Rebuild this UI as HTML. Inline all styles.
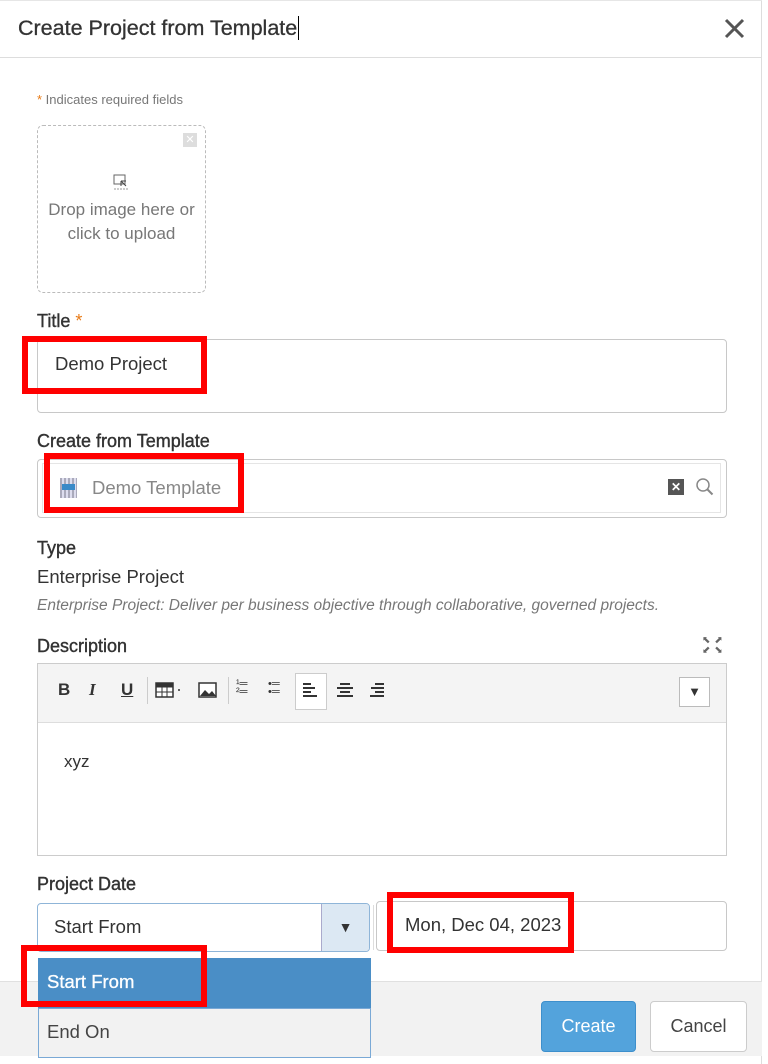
<!DOCTYPE html>
<html><head><meta charset="utf-8"><style>
*{box-sizing:border-box;margin:0;padding:0}
body{width:768px;height:1064px;background:#fff;font-family:"Liberation Sans",Arial,sans-serif;color:#333;position:relative;overflow:hidden}
.a{position:absolute}
.lbl{font-size:18px;color:#333;-webkit-text-stroke:0.4px #333}
.inp{border:1px solid #c8c8c8;border-radius:4px;background:#fff}
.red{border:6px solid #f00}
.tb{font-size:17px;font-weight:bold;color:#333}
</style></head><body>
<div class="a" style="left:0;top:0;width:762px;height:1064px;border-right:1px solid #ddd"></div>
<div class="a" style="left:0;top:0;width:762px;height:58px;border-bottom:1px solid #ddd;border-top:1px solid #e6e6e6"></div>
<div class="a" style="left:18px;top:16px;font-size:21.5px;color:#333;-webkit-text-stroke:0.3px #333">Create Project from Template<span style="border-left:1.5px solid #000;margin-left:1px"></span></div>
<svg class="a" style="left:724px;top:18px" width="21" height="21" viewBox="0 0 21 21"><path d="M2 2l17 17M19 2L2 19" stroke="#555" stroke-width="3"/></svg>

<div class="a" style="left:37px;top:92px;font-size:13px;color:#777"><span style="color:#e87a16">*</span> Indicates required fields</div>
<div class="a" style="left:37px;top:125px;width:169px;height:168px;border:1px dashed #bbb;border-radius:6px"></div>
<div class="a" style="left:183px;top:133px;width:14px;height:14px;background:#ddd;color:#fff;font-size:11px;text-align:center;line-height:14px">✕</div>
<svg class="a" style="left:113px;top:174px" width="18" height="18" viewBox="0 0 18 18"><rect x="1" y="1" width="11" height="9" fill="none" stroke="#666"/><path d="M8 7l5 5M8 7v5M8 7h5" stroke="#444" fill="none"/><path d="M1 15h14" stroke="#999" stroke-dasharray="2 1"/></svg>
<div class="a" style="left:33px;top:198px;width:177px;text-align:center;font-size:17px;color:#777;line-height:24px">Drop image here or<br>click to upload</div>

<div class="a lbl" style="left:37px;top:311px">Title <span style="color:#e87a16;-webkit-text-stroke:0">*</span></div>
<div class="a inp" style="left:37px;top:339px;width:690px;height:74px"></div>
<div class="a red" style="left:22px;top:336px;width:185px;height:58px"></div>
<div class="a" style="left:55px;top:353px;font-size:18.5px;color:#333">Demo Project</div>

<div class="a lbl" style="left:37px;top:431px">Create from Template</div>
<div class="a inp" style="left:37px;top:459px;width:690px;height:59px"></div>
<div class="a" style="left:42px;top:463px;width:679px;height:50px;border:1px solid #e5e5e5"></div>
<div class="a red" style="left:44px;top:453px;width:200px;height:60px"></div>
<div class="a" style="left:60px;top:478px;width:17px;height:20px;background:repeating-linear-gradient(90deg,#aab 0 2px,#dde 2px 4px)"><div style="margin:6px 2px;height:6px;background:#3a8ac8"></div></div>
<div class="a" style="left:92px;top:477px;font-size:18.5px;color:#888">Demo Template</div>
<div class="a" style="left:668px;top:479px;width:16px;height:16px;background:#555;color:#fff;font-size:12px;text-align:center;line-height:16px;font-weight:bold">✕</div>
<svg class="a" style="left:695px;top:477px" width="20" height="20" viewBox="0 0 20 20"><circle cx="8" cy="8" r="6" fill="none" stroke="#888" stroke-width="1.5"/><path d="M12.5 12.5l5 5" stroke="#888" stroke-width="2"/></svg>

<div class="a lbl" style="left:37px;top:538px">Type</div>
<div class="a" style="left:37px;top:566px;font-size:18.5px;color:#333">Enterprise Project</div>
<div class="a" style="left:37px;top:597px;font-size:15.5px;color:#777;font-style:italic">Enterprise Project: Deliver per business objective through collaborative, governed projects.</div>

<div class="a lbl" style="left:37px;top:636px">Description</div>
<div class="a" style="left:702px;top:636px;font-size:10px;color:#666;line-height:10px;letter-spacing:4px">⬉⬈<br>⬋⬊</div>
<div class="a" style="left:37px;top:663px;width:690px;height:193px;border:1px solid #ccc"></div>
<div class="a" style="left:38px;top:664px;width:688px;height:59px;background:#f4f4f4;border-bottom:1px solid #ddd"></div>
<div class="a tb" style="left:58px;top:680px">B</div>
<div class="a tb" style="left:89px;top:680px;font-style:italic;font-family:'Liberation Serif',serif">I</div>
<div class="a tb" style="left:121px;top:680px;text-decoration:underline">U</div>
<div class="a" style="left:147px;top:677px;width:1px;height:27px;background:#ccc"></div>
<svg class="a" style="left:155px;top:682px" width="34" height="16"><rect x="1" y="1" width="17" height="14" fill="#fff" stroke="#333" stroke-width="1.5"/><path d="M1 5h17M1 10h17M7 1v14M12 1v14" stroke="#333"/><rect x="1" y="1" width="17" height="4" fill="#333"/><circle cx="24" cy="8" r="1" fill="#333"/></svg>
<svg class="a" style="left:198px;top:682px" width="20" height="16"><rect x="1" y="1" width="17" height="14" fill="#fff" stroke="#333" stroke-width="1.5"/><path d="M2 14l5-6 4 4 3-3 4 5z" fill="#333"/></svg>
<div class="a" style="left:228px;top:677px;width:1px;height:27px;background:#ccc"></div>
<div class="a" style="left:236px;top:680px;font-size:11px;color:#333;line-height:8px">¹═<br>²═</div>
<div class="a" style="left:268px;top:680px;font-size:11px;color:#333;line-height:8px">•═<br>•═</div>
<div class="a" style="left:295px;top:673px;width:32px;height:37px;border:1px solid #ccc;background:#fff"></div>
<svg class="a" style="left:302px;top:682px" width="18" height="16"><path d="M1 2h8M1 6h12M1 10h8M1 14h14" stroke="#333" stroke-width="2"/></svg>
<svg class="a" style="left:336px;top:682px" width="18" height="16"><path d="M4 2h10M1 6h16M4 10h10M1 14h16" stroke="#333" stroke-width="2"/></svg>
<svg class="a" style="left:367px;top:682px" width="18" height="16"><path d="M8 2h9M4 6h13M8 10h9M3 14h14" stroke="#333" stroke-width="2"/></svg>
<div class="a" style="left:679px;top:677px;width:31px;height:30px;border:1px solid #bbb;background:#fff;text-align:center;font-size:13px;line-height:28px;color:#333">▼</div>
<div class="a" style="left:64px;top:752px;font-size:17px;color:#333">xyz</div>

<div class="a lbl" style="left:37px;top:874px">Project Date</div>
<div class="a" style="left:37px;top:903px;width:333px;height:49px;border:1px solid #8fb5d8;border-radius:4px;overflow:hidden;background:#fff">
<div style="position:absolute;right:0;top:0;width:48px;height:49px;background:#dce8f3;border-left:1px solid #aac;text-align:center;line-height:47px;font-size:14px;color:#333">▼</div></div>
<div class="a" style="left:54px;top:916px;font-size:18.5px;color:#333">Start From</div>
<div class="a" style="left:373px;top:905px;width:1px;height:45px;background:#ddd"></div>
<div class="a inp" style="left:376px;top:901px;width:351px;height:50px"></div>
<div class="a red" style="left:387px;top:892px;width:187px;height:61px"></div>
<div class="a" style="left:405px;top:914px;font-size:18.5px;color:#333">Mon, Dec 04, 2023</div>

<div class="a" style="left:0;top:981px;width:762px;height:75px;background:#f2f2f2;border-top:1px solid #e0e0e0"></div>
<div class="a" style="left:541px;top:1001px;width:95px;height:51px;background:#53a3dc;border:1px solid #3d8fcc;border-radius:4px;color:#fff;font-size:18px;text-align:center;line-height:49px">Create</div>
<div class="a" style="left:650px;top:1001px;width:97px;height:51px;background:#fff;border:1px solid #ccc;border-radius:4px;color:#444;font-size:18px;text-align:center;line-height:49px">Cancel</div>

<div class="a" style="left:38px;top:958px;width:333px;height:50px;background:#4a8ec6"></div>
<div class="a" style="left:38px;top:1008px;width:333px;height:50px;background:#f2f2f2;border:1px solid #7aa9d6"></div>
<div class="a" style="left:47px;top:971px;font-size:18.5px;color:#fff;-webkit-text-stroke:0.3px #fff">Start From</div>
<div class="a" style="left:47px;top:1021px;font-size:18.5px;color:#444">End On</div>
<div class="a red" style="left:21px;top:945px;width:186px;height:62px"></div>
</body></html>
